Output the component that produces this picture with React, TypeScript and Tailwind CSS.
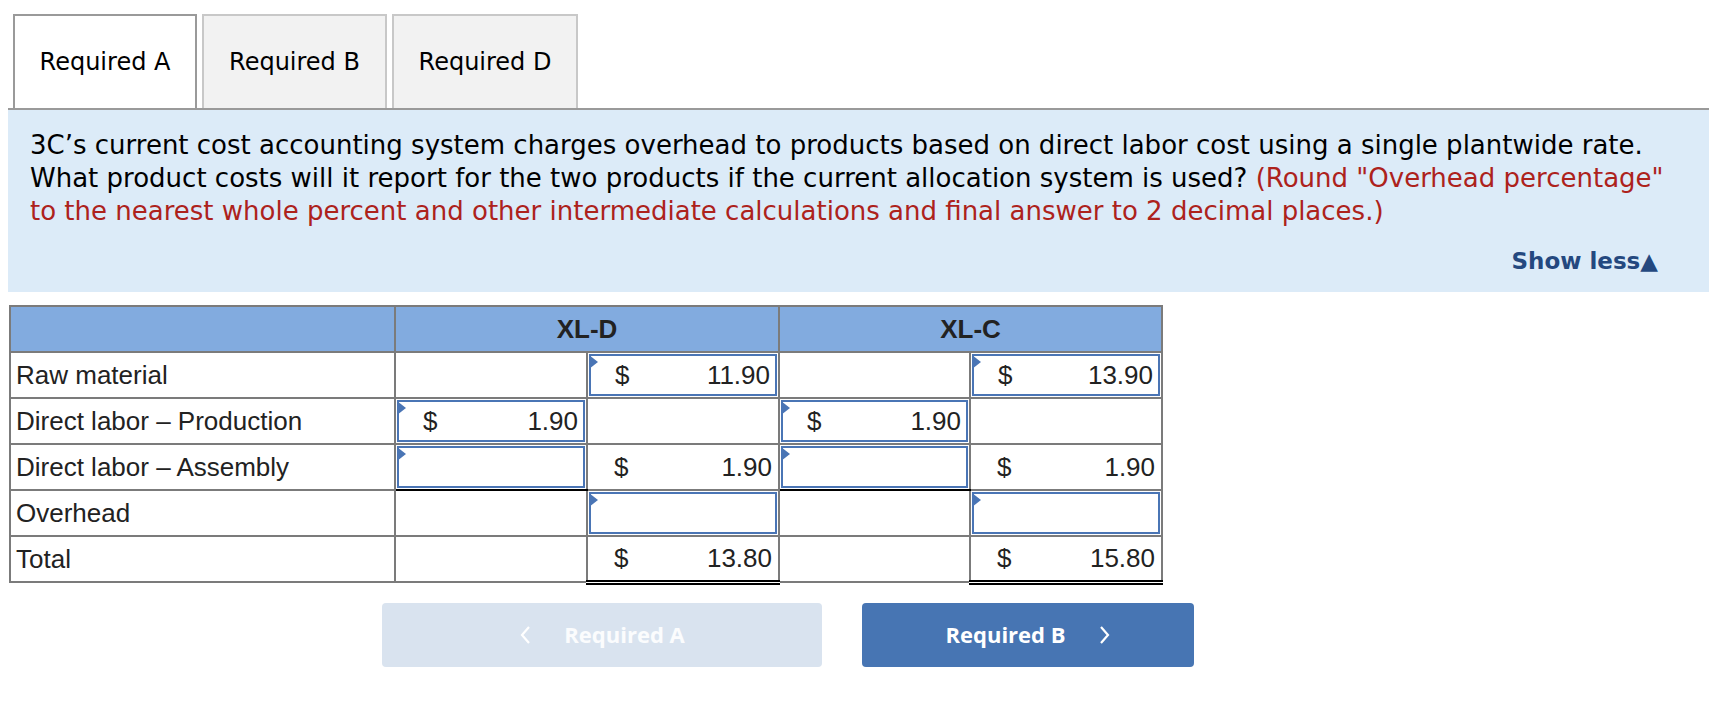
import React from "react";

type Cell = { input?: boolean; value?: string; dollar?: boolean; line?: "single" | "double" };

interface Row {
  label: string;
  cells: Cell[];
}

const rows: Row[] = [
  {
    label: "Raw material",
    cells: [{}, { input: true, dollar: true, value: "11.90" }, {}, { input: true, dollar: true, value: "13.90" }],
  },
  {
    label: "Direct labor \u2013 Production",
    cells: [{ input: true, dollar: true, value: "1.90" }, {}, { input: true, dollar: true, value: "1.90" }, {}],
  },
  {
    label: "Direct labor \u2013 Assembly",
    cells: [
      { input: true, line: "single" },
      { dollar: true, value: "1.90" },
      { input: true, line: "single" },
      { dollar: true, value: "1.90" },
    ],
  },
  {
    label: "Overhead",
    cells: [{}, { input: true, line: "single" }, {}, { input: true, line: "single" }],
  },
  {
    label: "Total",
    cells: [{}, { dollar: true, value: "13.80", line: "double" }, {}, { dollar: true, value: "15.80", line: "double" }],
  },
];

function Money({ dollar, value }: { dollar?: boolean; value?: string }) {
  return (
    <div className="flex h-full items-center justify-between pl-[24px] pr-[5px]">
      <span>{dollar ? "$" : ""}</span>
      <span>{value}</span>
    </div>
  );
}

function DataCell({ cell }: { cell: Cell }) {
  const line =
    cell.line === "double"
      ? "border-b-[5px] border-b-black border-double"
      : cell.line === "single"
        ? "border-b-black"
        : "";
  return (
    <td className={`border-2 border-[#7b7b7b] p-0 h-[46px] ${line}`}>
      {cell.input ? (
        <div className="relative h-[42px] m-[1px] border-2 border-[#4a75b5]">
          <span className="absolute -left-[2px] -top-[1px] w-0 h-0 border-y-[7px] border-y-transparent border-l-[9px] border-l-[#4a75b5]" />
          <Money dollar={cell.dollar} value={cell.value} />
        </div>
      ) : (
        <div className="h-[42px] pl-[2px] pr-[1px]">
          {cell.value ? <Money dollar={cell.dollar} value={cell.value} /> : null}
        </div>
      )}
    </td>
  );
}

function Chevron({ dir }: { dir: "left" | "right" }) {
  return (
    <svg width="13" height="18" viewBox="0 0 13 18" fill="none">
      <polyline
        points={dir === "left" ? "10,1 3,9 10,17" : "3,1 10,9 3,17"}
        stroke="white"
        strokeWidth="2.2"
        strokeLinejoin="miter"
      />
    </svg>
  );
}

export default function App() {
  return (
    <div className="w-[1730px] h-[704px] bg-white font-['DejaVu_Sans',sans-serif] text-black overflow-hidden">
      {/* tabs */}
      <div className="flex pl-[13px] pt-[14px] gap-[5px]">
        <div className="w-[184px] h-[94px] border-2 border-b-0 border-[#9a9a9a] bg-white flex items-center justify-center text-[24px]">
          Required A
        </div>
        <div className="w-[185px] h-[94px] border-2 border-b-0 border-[#c8c8c8] bg-[#f2f2f2] flex items-center justify-center text-[24px]">
          Required B
        </div>
        <div className="w-[186px] h-[94px] border-2 border-b-0 border-[#c8c8c8] bg-[#f2f2f2] flex items-center justify-center text-[24px]">
          Required D
        </div>
      </div>
      <div className="ml-[8px] w-[1701px] h-[2px] bg-[#9a9a9a]" />

      {/* instructions */}
      <div className="ml-[8px] w-[1701px] h-[182px] bg-[#dcebf8] pl-[22px] pt-[19px] text-[26px] leading-[33px]">
        <div className="whitespace-nowrap">
          3C’s current cost accounting system charges overhead to products based on direct labor cost using a single plantwide rate.
        </div>
        <div className="whitespace-nowrap">
          What product costs will it report for the two products if the current allocation system is used?{" "}
          <span className="text-[#ad221c]">(Round "Overhead percentage"</span>
        </div>
        <div className="whitespace-nowrap text-[#ad221c]">
          to the nearest whole percent and other intermediate calculations and final answer to 2 decimal places.)
        </div>
        <div className="mt-[17px] pr-[51px] flex justify-end items-center font-bold text-[23px] text-[#24487f]">
          Show less<span className="text-[23px] leading-none">▲</span>
        </div>
      </div>

      {/* table */}
      <div className="mt-[13px] ml-[9px] font-['Liberation_Sans',Arial,sans-serif] text-[26px] text-[#222]">
        <table className="border-collapse table-fixed w-[1152px] border-2 border-[#7b7b7b]">
          <colgroup>
            <col className="w-[385px]" />
            <col className="w-[192px]" />
            <col className="w-[192px]" />
            <col className="w-[191px]" />
            <col className="w-[192px]" />
          </colgroup>
          <thead>
            <tr className="bg-[#82abdf] h-[46px]">
              <th className="border-2 border-[#7b7b7b]" />
              <th colSpan={2} className="border-2 border-[#7b7b7b] font-bold text-center">
                XL-D
              </th>
              <th colSpan={2} className="border-2 border-[#7b7b7b] font-bold text-center">
                XL-C
              </th>
            </tr>
          </thead>
          <tbody>
            {rows.map((row) => (
              <tr key={row.label}>
                <td className="border-2 border-[#7b7b7b] h-[46px] pl-[5px] text-left">{row.label}</td>
                {row.cells.map((cell, i) => (
                  <DataCell key={i} cell={cell} />
                ))}
              </tr>
            ))}
          </tbody>
        </table>
      </div>

      {/* nav buttons */}
      <div className="mt-[18px] ml-[382px] flex gap-[40px] font-['Open_Sans',sans-serif] font-bold text-[22px] text-white">
        <button
          type="button"
          className="w-[440px] h-[64px] rounded-[4px] bg-[#d9e3ef] flex items-center justify-center gap-[32px] text-white/90"
        >
          <Chevron dir="left" />
          Required A
        </button>
        <button
          type="button"
          className="w-[332px] h-[64px] rounded-[4px] bg-[#4775b3] flex items-center justify-center gap-[32px]"
        >
          Required B
          <Chevron dir="right" />
        </button>
      </div>
    </div>
  );
}
